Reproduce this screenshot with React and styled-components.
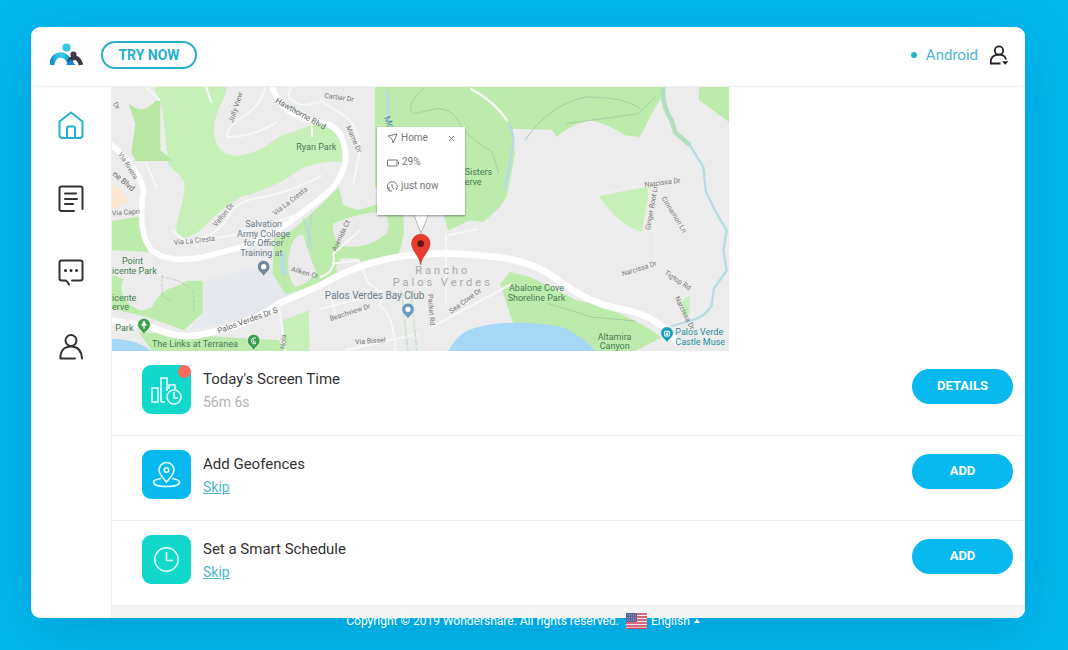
import React from 'react';
import styled, { createGlobalStyle } from 'styled-components';

const GlobalStyle = createGlobalStyle`
    * {
        box-sizing: border-box;
    }

    body {
        margin: 0;
        min-height: 100vh;
        overflow-x: hidden;
        background: #00b9ee;
        font-family: Roboto, "Liberation Sans", sans-serif;
        color: #333;
    }

    button {
        font-family: inherit;
        cursor: pointer;
    }
`;

const tasks = [
    { title: "Today's Screen Time", info: '56m 6s', action: 'DETAILS', icon: 'chart', color: '#12d8cb', alert: true },
    { title: 'Add Geofences', action: 'ADD', icon: 'fence', color: '#07b9ef' },
    { title: 'Set a Smart Schedule', action: 'ADD', icon: 'clock', color: '#12d8cb' },
];

const navItems = [
    { label: 'Home', icon: HomeIcon, active: true },
    { label: 'Report', icon: ReportIcon },
    { label: 'Messages', icon: MessageIcon },
    { label: 'Profile', icon: PersonIcon },
];

// Small street names: x, y, angle, text
const streets = [
    [363, 108, -72, 'Jolly View'],
    [2, 50, 60, 'Dr'],
    [18, 200, 58, 'Via Rivera'],
    [0, 386, -4, 'Via Capri'],
    [186, 474, -6, 'Via La Cresta'],
    [312, 420, -50, 'Vallon Dr'],
    [490, 386, -38, 'Via La Cresta'],
    [536, 552, 16, 'Ailken Ct'],
    [520, 786, -88, 'Nola'],
    [636, 32, 8, 'Cartier Dr'],
    [702, 120, 66, 'Marne Dr'],
    [672, 494, -65, 'Avenida Ct'],
    [656, 702, -18, 'Beachview Dr'],
    [730, 772, -4, 'Via Bissel'],
    [948, 622, 86, 'Packet Rd'],
    [1018, 680, -36, 'Sea Cove Dr'],
    [1598, 300, -7, 'Narcissa Dr'],
    [1614, 430, -80, 'Ginger Root Ln'],
    [1648, 334, 58, 'Cinnamon Ln'],
    [1532, 568, -18, 'Narcissa Dr'],
    [1656, 560, 34, 'Tigtop Rd'],
    [1688, 632, 64, 'Narcissa Dr'],
];

function Logo() {
    return (
        <svg width="34" height="24" viewBox="0 0 34 24" role="img" aria-label="Home page">
            <defs>
                <linearGradient id="arc" x1="0" x2="1">
                    <stop offset="0" stopColor="#178ed0" />
                    <stop offset=".35" stopColor="#38c8e5" />
                    <stop offset=".7" stopColor="#30c5e6" />
                    <stop offset="1" stopColor="#1683cf" />
                </linearGradient>
            </defs>
            <circle cx="16.500" cy="4.500" r="4" fill="#35c8d6" />
            <path d="M1.500 22C4 9 16 9 20 20" fill="none" stroke="url(#arc)" strokeWidth="5.500" />
            <path d="M19 19c4-7 10-5 12 3" fill="none" stroke="#3b3a48" strokeWidth="4.500" />
            <path d="M16 22l4.500-6 5 6z" fill="#1683cf" />
            <circle cx="23.500" cy="11.500" r="3" fill="#3b3a48" />
        </svg>
    );
}

function HomeIcon() {
    return (
        <svg width="26" height="28" viewBox="0 0 26 28">
            <path d="M1.500 10.500 13 1.500l11.500 9v13.500q0 3-3 3h-17q-3 0-3-3zM9 27V17q0-1.500 1.500-1.500h5Q17 15.500 17 17v10" />
        </svg>
    );
}

function ReportIcon() {
    return (
        <svg width="26" height="28" viewBox="0 0 26 28">
            <path d="M16 26H3.500q-2 0-2-2V3.500q0-2 2-2h19q2 0 2 2V24M7 8.500h11M7 14h12M7 19h8" />
        </svg>
    );
}

function MessageIcon() {
    return (
        <svg width="26" height="28" viewBox="0 0 26 28">
            <path d="M14 21.500h8.500q2 0 2-2v-16q0-2-2-2h-19q-2 0-2 2v16q0 2 2 2H7q2 0 4 4" />
            <path d="M7.500 11.500h.1M13 11.500h.1M18.500 11.500h.1" strokeWidth="3" />
        </svg>
    );
}

function PersonIcon() {
    return (
        <svg width="26" height="28" viewBox="0 0 26 28">
            <circle cx="13" cy="7.500" r="5.500" />
            <path d="M17 25.500H2.500C2 18 6 13.500 13 13.500S23.500 18 24 25.500" />
        </svg>
    );
}

function AccountIcon() {
    return (
        <svg width="20" height="20" viewBox="0 0 20 20" fill="none" stroke="#222" strokeWidth="1.800">
            <circle cx="10" cy="5.500" r="4.200" />
            <path d="M11.500 18.500H1.800C1.200 12 5 9.700 10 9.700c3.500 0 6 1.300 7 4.800" />
            <path d="M13 16.200h6.500L16.200 19.800z" fill="#222" stroke="none" />
        </svg>
    );
}

function TaskIcon({ name }) {
    return (
        <svg width="33" height="33" viewBox="0 0 33 33" fill="none" stroke="#e5fffc" strokeWidth="1.600">
            {name === 'chart' && (
                <>
                    <path d="M2 15h6v14H2zM11 29V5h6v13M11 29h4M19 16v-4h6v4" />
                    <circle cx="24" cy="24" r="7" />
                    <path d="M24 19v6h4" />
                </>
            )}
            {name === 'fence' && (
                <>
                    <path d="M16.500 24C12 19 9 16 9 12a7.500 7.500 0 0 1 15 0c0 4-3 7-7.500 12z" />
                    <circle cx="16.500" cy="12" r="2.300" />
                    <path d="M11 20.500c-5 .7-7.500 2-7.500 3.700C3.500 30 29.500 30 29.500 24.200c0-1.700-2.500-3-7.500-3.700" />
                </>
            )}
            {name === 'clock' && (
                <>
                    <circle cx="16.500" cy="16.500" r="11.700" />
                    <path d="M16.500 9v8.500H23" />
                </>
            )}
        </svg>
    );
}

function Flag() {
    return (
        <svg width="21" height="16" viewBox="0 0 21 16" aria-hidden="true">
            <path d="M0 0h21v16H0z" fill="#f6e9ee" />
            <path d="M0 1h21M0 4h21M0 7h21M0 10h21M0 13h21M0 15.500h21" stroke="#cf3d57" strokeWidth="1.300" />
            <path d="M0 0h11v9H0z" fill="#5a6193" />
            <path d="M1 2h9M1 4.500h9M1 7h9" stroke="#b4b9d6" strokeWidth=".8" strokeDasharray="1 1" />
        </svg>
    );
}

function PlacePin({ x, y, color, children }) {
    return (
        <g transform={`translate(${x} ${y})`}>
            <path d="M0 28C-4 14-19 12-19-3a19 19 0 0 1 38 0C19 12 4 14 0 28z" fill={color} stroke="#fff" strokeWidth="2" />
            {children || <circle cy="-3" r="8" fill="#fff" />}
        </g>
    );
}

function MapDrawing() {
    return (
        <MapSvg viewBox="0 0 1851 792" role="img" aria-label="Map of Rancho Palos Verdes">
            <path d="M0 0h1851v792H0z" fill="#ececec" />

            {/* west side */}
            <path d="M272 582 430 540l80-25 40 125-150 55-170 35 42-50z" fill="#e5e9ee" />
            <path d="M0 290 30 310 50 340 0 370z" fill="#fae7cf" />
            <path d="M125 0h220q-3 25-22 60-24 50-14 95 12 50 70 52 60-8 121-57Q570 125 615 108l75 37v78q-80 0-130 26-60 50-175 81-50 30-95 75-50 55-85 45-25-10 5-100 15-60-1-78l-40-40-19-172z" fill="#c7f0b9" />
            <path d="M50 50Q95 85 130 42h15v148l40 32H72l-14-25 12-87z" fill="#b7e7a3" />
            <path d="M0 402 85 388Q84 450 112 495L0 490zM0 565l35 12q-20 30 15 72 35 35 70 10 25-50 65-58l42-20h45v98l-57 51-110-40L0 665zM80 735l420 25 20 32H120z" fill="#bdebac" />
            <path d="M540 430 630 350 680 300l14 55 45 15 60-20 75 30 2 60-15 60-110 22-130 70-100 30-40-60 5-110z" fill="#bdebac" />
            <path d="M0 755q70 0 120 37H0z" fill="#a5d7f7" />
            <path d="M540 470q12-30 35-25 15 60 38 110-20 35-65 45-35-55-8-130zM662 410q85-35 145-36 35 20 17 66-50 40-107 40-55 0-55-70zM672 540l15-26h52l10 24-70 30z" fill="#eaeaea" />
            <path d="M513 700 590 670l3 122h-75z" fill="#c7f0b9" />
            <path d="M515 500q-10 30 5 65" stroke="#b2dfe6" strokeWidth="12" fill="none" />
            <path d="M575 395q25 60 10 85M600 380q-15 50 0 110" stroke="#b5ddce" strokeWidth="6" fill="none" />

            {/* canyon reserve and coast */}
            <path d="M789 0h1062v105l-90-65V0h-110l4 20-30 50-41 80-45-5q-45-30-100-45-60 10-105 50l-15-22-120-3 10 75-25 130-20 30-50 45-40-5-65 30-20-60-2-70H789z" fill="#bdebac" />
            <path d="M1649-2h112v42l-62-8z" fill="#ececec" />
            <path d="M1164 590l30-35 60 15 140 70q120 25 225 90l30 22-80 40h-130l-55-45q-60-35-180-37z" fill="#bdebac" />
            <path d="M1009 792q25-45 55-60 70-30 190-24 75 5 110 17l50 32 40 35z" fill="#a5d7f7" />
            <path d="M1461 327 1615 298l-26 137q-70-20-128-108z" fill="#c7f0b9" />
            <path d="m1708 644 25-20v57l-14 8z" fill="#c7f0b9" />
            <path d="M1654 0q-5 55 25 100l10 35 45 40" stroke="#b4dfbf" strokeWidth="14" fill="none" />
            <path d="m1734 175 40 65 8 75 32 65 30 50-10 60 10 60-38 55-7 50q-20 35-60 45l-60 17" stroke="#b7dbe4" strokeWidth="7" fill="none" />
            <path d="M1192 110q20 50 6 90-8 60-22 110M825 10l6 95" stroke="#b7dbe4" strokeWidth="8" fill="none" />

            {/* trails */}
            <g fill="none" stroke="#a5cfa0" strokeWidth="3">
                <path d="M940 0q-70 65-30 80l50-12q60-15 90 55 40 45 90 70l20 65M1239 160q70-105 180-130 130 0 170 40M1360 110l220-30 50-50M1310 650l130 40 130 12" />
                <path d="M150 565v60l30 20M150 570q70 10 95 45v55" stroke="#b2b2b2" strokeDasharray="8 4" strokeWidth="2" />
            </g>

            {/* minor roads */}
            <g fill="none" stroke="#f8f8f8" strokeWidth="6">
                <path d="M100 0l45 40M283 0l15 48M460 0q-10 50-60 85-55 30-55 65 80 0 150-45M100 225q25 55 35 80M180 430l45 35q85-15 120-70 25-50 80-60 90-10 205-70M225 465l150-22 180-60M540 0q-30 40 35 55l55-10M600 100v50" />
                <path d="M624 40l80 50q40 40 40 100l-20 100M624 570q50-15 40-70l80-70M660 530l80-10 30 70q60 30 30 65 45 20 50 137M650 600l20 80M624 665l180-45M500 650l20 142M1002 440v210M960 720l240-130M1010 445l90-20M700 790l220-50" />
                <path d="M1461 320l160-30M1610 305l20 150v70M1630 525l-100 40M1640 520l65 60M1650 330l65 100M1490 660l30-50" stroke="#efefef" />
            </g>
            <path d="M1075 5q70 35 112 98" stroke="#f3f8ef" strokeWidth="7" fill="none" />
            <path d="M868 610l20 182M895 610l20 182" stroke="#c9e5ce" strokeWidth="5" strokeDasharray="24 5" fill="none" />

            {/* main roads */}
            <g fill="none" stroke="#fff" strokeLinecap="round">
                <path d="M0 175q80 65 95 135-20 120 20 175 45 45 150 27l125-32q80-30 150-80l85-65q65-45 77-120-5-100-75-108-95-15-130-70L480 0" strokeWidth="17" />
                <path d="M0 702l120 18q70 35 135 25 150-25 245-95l125-55q120-70 250-88 110-15 230-2 160 10 240 80 100 70 180 80 115 20 170 100" strokeWidth="20" />
            </g>

            <g fill="#777" fontSize="21">
                {streets.map(([x, y, angle, name], i) => (
                    <text key={i} transform={`translate(${x} ${y}) rotate(${angle})`}>{name}</text>
                ))}
            </g>
            <g fill="#666" fontSize="24">
                <text transform="translate(488 46) rotate(29)">Hawthorne Blvd</text>
                <text transform="translate(0 264) rotate(40)">ne Blvd</text>
                <text transform="translate(320 740) rotate(-20)">Palos Verdes Dr S</text>
            </g>

            <g fill="#467d51" fontSize="27">
                <text x="553" y="189">Ryan Park</text>
                <text x="30" y="531">Point</text>
                <text x="0" y="560">icente Park</text>
                <text x="0" y="641">icente</text>
                <text x="0" y="669">erve</text>
                <text x="10" y="732">Park</text>
                <text x="120" y="779">The Links at Terranea</text>
                <text x="1058" y="265">Sisters</text>
                <text x="1058" y="294">erve</text>
                <text x="1191" y="612">Abalone Cove</text>
                <text x="1187" y="641">Shoreline Park</text>
                <text x="1457" y="758">Altamira</text>
                <text x="1463" y="785">Canyon</text>
            </g>
            <g fill="#6d7c8b" fontSize="27" textAnchor="middle">
                <text x="455" y="420">Salvation</text>
                <text x="455" y="450">Army College</text>
                <text x="455" y="478">for Officer</text>
                <text x="448" y="507">Training at</text>
            </g>
            <text x="638" y="637" fill="#6d7c8b" fontSize="30">Palos Verdes Bay Club</text>
            <g fill="#a8a8a8" fontSize="33" letterSpacing="9">
                <text x="910" y="561">Rancho</text>
                <text x="842" y="597">Palos Verdes</text>
            </g>
            <g fill="#278d9c" fontSize="27">
                <text x="1690" y="744">Palos Verde</text>
                <text x="1690" y="773">Castle Muse</text>
            </g>
            <text transform="translate(815 92) rotate(66)" fill="#5084b8" fontSize="27">Mc</text>

            <PlacePin x={455} y={542} color="#71899b" />
            <PlacePin x={96} y={716} color="#399f4d"><path d="M0-16-9 0h7v9h4V0h7z" fill="#fff" /></PlacePin>
            <PlacePin x={425} y={764} color="#399f4d"><path d="M7-10A9 9 0 1 0 7 5M-1-8v9H7" fill="none" stroke="#fff" strokeWidth="3" /></PlacePin>
            <PlacePin x={888} y={670} color="#6c9aba" />
            <PlacePin x={1665} y={741} color="#17a1b4"><path d="M-7 6V-8H7V6zM-2-3h4v6h-4z" fill="none" stroke="#fff" strokeWidth="3" /></PlacePin>

            <path d="M905 382l22 57 23-57" fill="#fff" stroke="#b8b8b8" strokeWidth="3" />
            <path d="M926 533C922 505 899 493 899 469a27 27 0 0 1 55 0c0 24-24 36-28 64z" fill="#e93b30" stroke="#c6362e" strokeWidth="2" />
            <circle cx="926" cy="470" r="10" fill="#671511" />
        </MapSvg>
    );
}

function LocationPopup() {
    return (
        <Popup>
            <PopupLine>
                <svg width="11" height="11" viewBox="0 0 11 11"><path d="M1 3 10 1 6 10 5 6z" /></svg>
                Home
                <CloseButton aria-label="Close">
                    <svg width="7" height="7" viewBox="0 0 7 7"><path d="m1 1 5 5M6 1 1 6" /></svg>
                </CloseButton>
            </PopupLine>
            <PopupLine>
                <svg width="12" height="11" viewBox="0 0 12 11"><path d="M.5 3h9.500v6H.5zM11.500 4.500v3" /></svg>
                29%
            </PopupLine>
            <PopupLine>
                <svg width="11" height="11" viewBox="0 0 11 11"><path d="M2 9.500A5 5 0 1 1 9 9M2 6v4h3M5 3v3l2 2" /></svg>
                just now
            </PopupLine>
        </Popup>
    );
}

function TaskRow({ task }) {
    return (
        <Row>
            <Tile $color={task.color}>
                <TaskIcon name={task.icon} />
                {task.alert && <AlertDot />}
            </Tile>
            <RowText>
                <RowTitle>{task.title}</RowTitle>
                {task.info ? <RowInfo>{task.info}</RowInfo> : <SkipLink href="#skip">Skip</SkipLink>}
            </RowText>
            <ActionButton>{task.action}</ActionButton>
        </Row>
    );
}

function App() {
    return (
        <>
            <GlobalStyle />
            <Card>
                <Header>
                    <Logo />
                    <TryButton>TRY NOW</TryButton>
                    <Device>Android</Device>
                    <AccountButton aria-label="Account"><AccountIcon /></AccountButton>
                </Header>
                <Body>
                    <Nav>
                        {navItems.map(({ label, icon: Icon, active }) => (
                            <NavLink key={label} href="#nav" aria-label={label} $active={active}>
                                <Icon />
                            </NavLink>
                        ))}
                    </Nav>
                    <Main>
                        <MapBox>
                            <MapDrawing />
                            <LocationPopup />
                        </MapBox>
                        {tasks.map((task) => <TaskRow key={task.title} task={task} />)}
                    </Main>
                </Body>
            </Card>
            <Footer>
                <span>Copyright © 2019 Wondershare. All rights reserved.</span>
                <LanguageButton>
                    <Flag />
                    English
                    <svg width="6" height="4" viewBox="0 0 6 4"><path d="m0 4 3-4 3 4z" fill="#fff" /></svg>
                </LanguageButton>
            </Footer>
        </>
    );
}

const Card = styled.div`
    margin: 27px 43px 0 31px;
    overflow: hidden;
    border-radius: 9px;
    background: #fff;
    box-shadow: 0 12px 60px rgba(0, 90, 150, 0.28);
`;

const Header = styled.header`
    display: flex;
    align-items: center;
    height: 60px;
    padding: 0 16px 4px 19px;
    border-bottom: 1px solid #f0f0f0;
`;

const TryButton = styled.button`
    height: 28px;
    width: 96px;
    margin-left: 17px;
    padding: 0;
    border: 2px solid #27aecd;
    border-radius: 14px;
    background: #fff;
    color: #27aecd;
    font-size: 14px;
    font-weight: 700;
`;

const Device = styled.div`
    display: flex;
    align-items: center;
    gap: 9px;
    margin-left: auto;
    color: #4cb8cb;
    font-size: 15px;

    &::before {
        content: '';
        width: 6px;
        height: 6px;
        border-radius: 50%;
        background: #20b8c4;
    }
`;

const AccountButton = styled.button`
    display: flex;
    margin-left: 11px;
    padding: 0;
    border: 0;
    background: none;
`;

const Body = styled.div`
    display: flex;
`;

const Nav = styled.nav`
    display: flex;
    flex-direction: column;
    align-items: center;
    gap: 46px;
    flex: 0 0 81px;
    padding-top: 24px;
    border-right: 1px solid #f0f0f0;
`;

const NavLink = styled.a`
    display: flex;
    color: ${({ $active }) => ($active ? '#22b1d0' : '#333')};

    svg {
        fill: none;
        stroke: currentColor;
        stroke-width: 2;
        stroke-linecap: round;
        stroke-linejoin: round;
    }
`;

const Main = styled.main`
    flex: 1;
    min-width: 0;
    padding-bottom: 12px;
    background: #f5f5f6;
`;

const MapBox = styled.div`
    position: relative;
    background: #fff;
`;

const MapSvg = styled.svg`
    display: block;
    width: 617px;
    font-family: Roboto, sans-serif;
`;

const Popup = styled.div`
    position: absolute;
    left: 265px;
    top: 40px;
    display: flex;
    flex-direction: column;
    gap: 12px;
    width: 88px;
    height: 88px;
    padding: 5px 10px;
    background: #fff;
    box-shadow: 0 1px 2px rgba(0, 0, 0, 0.4);
`;

const PopupLine = styled.div`
    display: flex;
    align-items: center;
    gap: 3px;
    font-size: 10px;
    line-height: 12px;
    color: #777;

    svg {
        fill: none;
        stroke: #777;
    }
`;

const CloseButton = styled.button`
    display: flex;
    margin-left: auto;
    padding: 0;
    border: 0;
    background: none;
`;

const Row = styled.section`
    display: flex;
    height: 85px;
    padding: 14px 12px 0 30px;
    border-bottom: 1px solid #eee;
    background: #fff;
`;

const Tile = styled.div`
    position: relative;
    display: flex;
    align-items: center;
    justify-content: center;
    flex: none;
    width: 49px;
    height: 49px;
    border-radius: 9px;
    background: ${({ $color }) => $color};
`;

const AlertDot = styled.span`
    position: absolute;
    top: 0;
    right: 0;
    width: 13px;
    height: 13px;
    border-radius: 50%;
    background: #fb6a5c;
`;

const RowText = styled.div`
    display: flex;
    flex-direction: column;
    align-items: flex-start;
    gap: 3px;
    margin-left: 12px;
    padding-top: 4px;
`;

const RowTitle = styled.div`
    font-size: 15px;
    line-height: 20px;
`;

const RowInfo = styled.div`
    font-size: 14px;
    line-height: 20px;
    color: #b3b3b3;
`;

const SkipLink = styled.a`
    font-size: 14px;
    line-height: 20px;
    color: #4cb8cb;
`;

const ActionButton = styled.button`
    width: 101px;
    height: 35px;
    margin: 4px 0 0 auto;
    padding: 0 0 2px;
    border: 0;
    border-radius: 18px;
    background: #07b9ef;
    color: #fff;
    font-size: 13px;
    font-weight: 700;
`;

const Footer = styled.footer`
    position: relative;
    display: flex;
    align-items: center;
    justify-content: center;
    gap: 7px;
    margin-top: -6px;
    padding-right: 22px;
    color: #fff;
    font-size: 12px;
    line-height: 18px;
`;

const LanguageButton = styled.button`
    display: flex;
    align-items: center;
    gap: 4px;
    padding: 0;
    border: 0;
    background: none;
    color: #fff;
    font-size: 12px;
    line-height: 18px;
`;

export default App;
